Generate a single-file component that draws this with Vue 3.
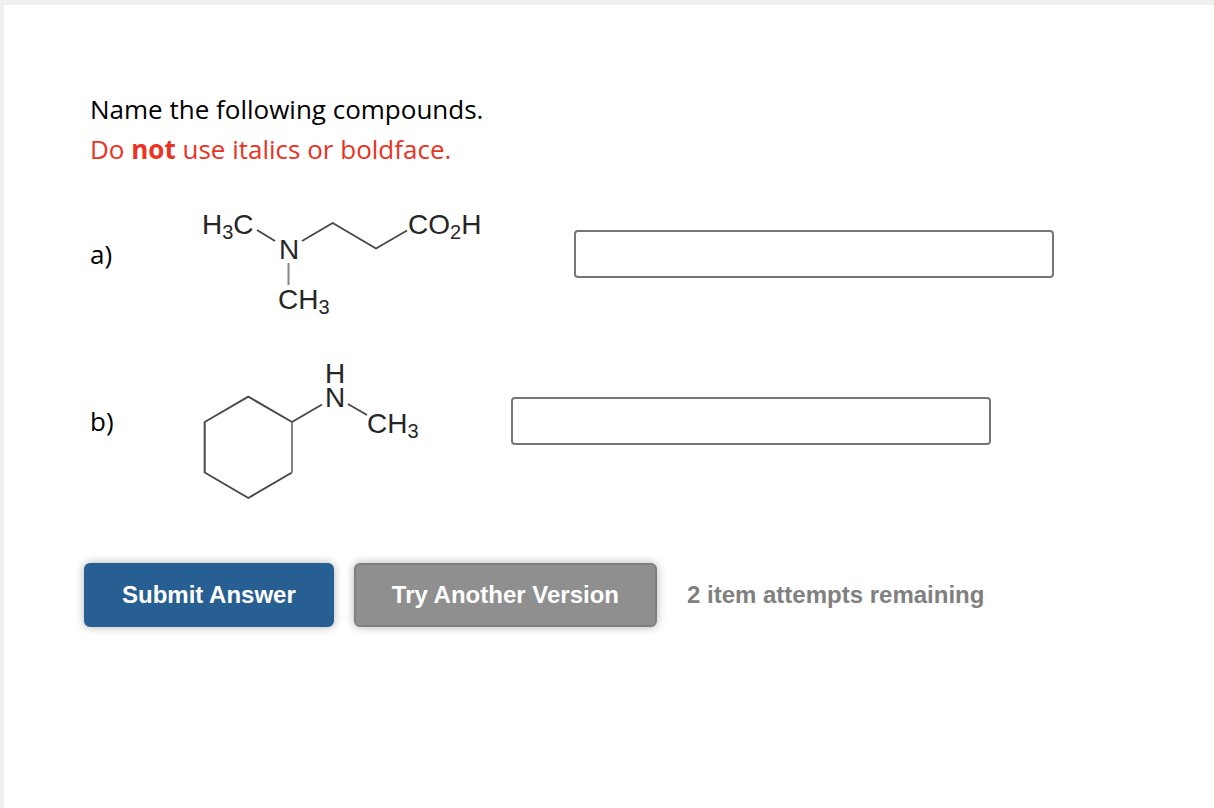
<script setup>
import { ref } from 'vue'

const answerA = ref('')
const answerB = ref('')
const attempts = 2
</script>

<template>
  <main class="page">
    <form class="content" @submit.prevent>
      <section class="question">
        <p class="line">Name the following compounds.</p>
        <p class="line note">Do <strong>not</strong> use italics or boldface.</p>

        <div class="row row-a">
          <label class="letter" for="answer-a">a)</label>
          <svg class="molecule" width="300" height="128" viewBox="200 190 300 128" role="img" aria-label="Compound a">
            <g class="bonds">
              <path d="M257 230L275 241" />
              <path d="M302 241L332.700 223L376 248.500L407 230.500" />
              <path class="soft" d="M288.500 263V285" />
            </g>
            <text x="202" y="234">H<tspan class="sub" dy="5">3</tspan><tspan dy="-5">C</tspan></text>
            <text x="279" y="259">N</text>
            <text x="278" y="309">CH<tspan class="sub" dy="5">3</tspan></text>
            <text x="408" y="234">CO<tspan class="sub" dy="5">2</tspan><tspan dy="-5">H</tspan></text>
          </svg>
          <input id="answer-a" v-model="answerA" class="answer" type="text" autocomplete="off" />
        </div>

        <div class="row row-b">
          <label class="letter" for="answer-b">b)</label>
          <svg class="molecule" width="237" height="160" viewBox="200 341 237 160" role="img" aria-label="Compound b">
            <g class="bonds">
              <path d="M292 422L248.300 396.700L204.700 422V472.500L248.300 498L292 472.500" />
              <path class="soft" d="M292 422V472.500" />
              <path d="M292 422L322 404.500" />
              <path d="M348 404L367 415" />
            </g>
            <text x="325" y="383">H</text>
            <text x="325" y="407">N</text>
            <text x="367" y="433">CH<tspan class="sub" dy="5">3</tspan></text>
          </svg>
          <input id="answer-b" v-model="answerB" class="answer" type="text" autocomplete="off" />
        </div>
      </section>

      <div class="actions">
        <button class="btn primary" type="submit">Submit Answer</button>
        <button class="btn secondary" type="button">Try Another Version</button>
        <span class="status">{{ attempts }} item attempts remaining</span>
      </div>
    </form>
  </main>
</template>

<style>
body {
  margin: 0;
  background: #fff;
}
</style>

<style scoped>
.page {
  box-sizing: border-box;
  min-height: 100vh;
  border-top: 5px solid #efefef;
  border-left: 4px solid #efefef;
  background: #fff;
  color: #000;
  font-family: "Open Sans", sans-serif;
  font-size: 26px;
  line-height: 40px;
}

.content {
  padding: 84px 80px;
}

.question {
  padding: 0 6px;
}

.line {
  margin: 0;
}

.note {
  color: #ea3323;
}

.row {
  display: flex;
  align-items: center;
}

.row-a {
  margin-top: 21px;
}

.row-b {
  margin-top: 23px;
}

.letter {
  width: 110px;
  flex: none;
}

.molecule {
  flex: none;
  margin-right: 74px;
}

.molecule text {
  fill: #262626;
  font-family: "Liberation Sans", Arial, sans-serif;
  font-size: 28px;
}

.molecule .sub {
  font-size: 20px;
}

.bonds path {
  fill: none;
  stroke: #4a4a4a;
  stroke-width: 2;
  stroke-linejoin: round;
}

.bonds .soft {
  stroke: #858585;
}

.answer {
  box-sizing: border-box;
  flex: 0 1 480px;
  min-width: 0;
  height: 48px;
  padding: 2px 8px;
  border: 2px solid #767676;
  border-radius: 4px;
  background: #fff;
  color: inherit;
  font: inherit;
}

.actions {
  display: flex;
  align-items: center;
  margin-top: 62px;
  font-family: "Liberation Sans", Arial, sans-serif;
  font-size: 24px;
  font-weight: bold;
  line-height: 28px;
}

.btn {
  box-sizing: border-box;
  height: 64px;
  margin: 0 20px 0 0;
  padding: 0 36px;
  border: 2px solid;
  border-radius: 6px;
  box-shadow: 0 0 10px rgba(0, 0, 0, 0.3);
  color: #fff;
  font: inherit;
  white-space: nowrap;
  cursor: pointer;
}

.primary {
  border-color: #285f93;
  background: #285f93;
}

.secondary {
  border-color: #7f7f7f;
  background: #8f8f8f;
}

.status {
  margin-left: 10px;
  color: #808080;
}
</style>
